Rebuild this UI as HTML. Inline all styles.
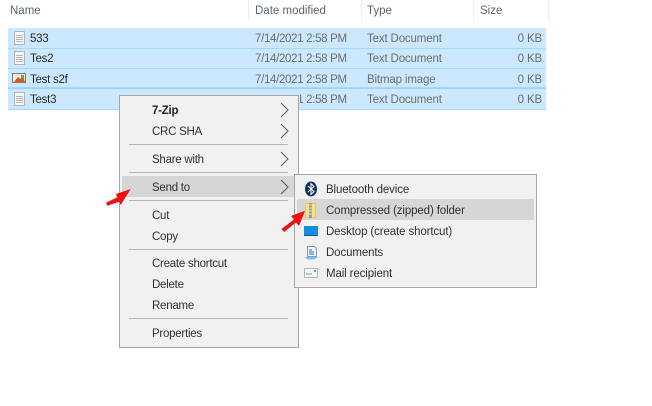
<!DOCTYPE html>
<html>
<head>
<meta charset="utf-8">
<style>
html,body{margin:0;padding:0;width:652px;height:406px;overflow:hidden;background:#fff}
body{position:relative;font-family:"Liberation Sans",sans-serif;font-size:11.5px;color:#333}
#w{position:absolute;left:0;top:0;width:652px;height:406px;filter:blur(.3px)}
.a{position:absolute}
.t{position:absolute;white-space:nowrap;line-height:14px}
.h{color:#5a6470}
.sep{position:absolute;top:0;width:1px;height:21px;background:#ededed}
.row{position:absolute;left:8px;width:538px;height:20px;background:#cce8ff;border-bottom:1px solid #a6d8ff;box-sizing:content-box}
.g{color:#6d6d6d;letter-spacing:-.15px}
.d{letter-spacing:-.32px}
.n{color:#2a2a2a;letter-spacing:-.25px}
.m{position:absolute;background:#f1f1f1;border:1px solid #a6a6a6;box-sizing:border-box}
.ln{position:absolute;left:129px;width:159px;height:1px;background:#b5b5b5}
.i{color:#303030;letter-spacing:-.25px}
.s{color:#303030;letter-spacing:-.12px}
svg{position:absolute;overflow:visible}
</style>
</head>
<body>
<div id="w">
<div class="t h" style="left:10px;top:4px">Name</div>
<div class="t h" style="left:255px;top:4px">Date modified</div>
<div class="t h" style="left:367px;top:4px">Type</div>
<div class="t h" style="left:480px;top:4px">Size</div>
<div class="sep" style="left:248px"></div>
<div class="sep" style="left:361px"></div>
<div class="sep" style="left:473px"></div>
<div class="sep" style="left:548px"></div>

<div class="row" style="top:28px"></div>
<div class="row" style="top:49px;height:19px"></div>
<div class="row" style="top:69px;height:18px"></div>
<div class="row" style="top:88px;height:20px;border-top:1px solid #99d1ff"></div>

<svg style="left:0;top:0" width="40" height="110">
 <g fill="#f6f6f6" stroke="#b4b4b4" stroke-width="1">
  <path d="M14.5 31.5h10l0 13h-10z"/><path d="M14.5 51.5h10l0 13h-10z"/><path d="M14.5 92.5h10l0 13h-10z"/>
 </g>
 <g stroke="#b8b8b8" stroke-width="1">
  <path d="M16 35.5h7M16 37.5h7M16 39.5h7M16 41.5h7"/>
  <path d="M16 55.5h7M16 57.5h7M16 59.5h7M16 61.5h7"/>
  <path d="M16 96.5h7M16 98.5h7M16 100.5h7M16 102.5h7"/>
 </g>
 <rect x="12.5" y="73.5" width="13" height="9" fill="#f3efe8" stroke="#8a7868"/>
 <path d="M14 82l4-5 2 2 3-3 2 6z" fill="#d6581e"/>
 <rect x="21" y="75" width="3" height="3" fill="#6aa84f"/>
</svg>

<div class="t n" style="left:30px;top:32px">533</div>
<div class="t n" style="left:30px;top:52px">Tes2</div>
<div class="t n" style="left:30px;top:73px">Test s2f</div>
<div class="t n" style="left:30px;top:93px">Test3</div>

<div class="t g d" style="left:255px;top:32px">7/14/2021 2:58 PM</div>
<div class="t g d" style="left:255px;top:52px">7/14/2021 2:58 PM</div>
<div class="t g d" style="left:255px;top:73px">7/14/2021 2:58 PM</div>
<div class="t g d" style="left:255px;top:93px;clip-path:inset(0 0 0 45px)">7/14/2021 2:58 PM</div>
<div class="t g" style="left:367px;top:32px">Text Document</div>
<div class="t g" style="left:367px;top:52px">Text Document</div>
<div class="t g" style="left:367px;top:73px">Bitmap image</div>
<div class="t g" style="left:367px;top:93px">Text Document</div>
<div class="t g" style="right:110px;top:32px">0 KB</div>
<div class="t g" style="right:110px;top:52px">0 KB</div>
<div class="t g" style="right:110px;top:73px">0 KB</div>
<div class="t g" style="right:110px;top:93px">0 KB</div>

<div class="m" style="left:119px;top:95px;width:180px;height:253px"></div>
<div class="a" style="left:122px;top:176px;width:172px;height:21px;background:#d6d6d6"></div>
<div class="ln" style="top:144px"></div>
<div class="ln" style="top:172px"></div>
<div class="ln" style="top:200px"></div>
<div class="ln" style="top:249px"></div>
<div class="ln" style="top:318px"></div>

<div class="t i" style="left:152px;top:104px;font-weight:bold;color:#222">7-Zip</div>
<div class="t i" style="left:152px;top:125px">CRC SHA</div>
<div class="t i" style="left:152px;top:153px">Share with</div>
<div class="t i" style="left:152px;top:181px">Send to</div>
<div class="t i" style="left:152px;top:209px">Cut</div>
<div class="t i" style="left:152px;top:230px">Copy</div>
<div class="t i" style="left:152px;top:257px">Create shortcut</div>
<div class="t i" style="left:152px;top:278px">Delete</div>
<div class="t i" style="left:152px;top:299px">Rename</div>
<div class="t i" style="left:152px;top:327px">Properties</div>

<svg style="left:0;top:0" width="300" height="200" fill="none" stroke="#5a5a5a" stroke-width="1">
 <path d="M281 103l7 7-7 7"/><path d="M281 124l7 7-7 7"/><path d="M281 152l7 7-7 7"/><path d="M281 180l7 7-7 7"/>
</svg>

<div class="m" style="left:294px;top:174px;width:243px;height:114px"></div>
<div class="a" style="left:297px;top:199px;width:237px;height:21px;background:#d6d6d6"></div>

<div class="t s" style="left:326px;top:183px">Bluetooth device</div>
<div class="t s" style="left:326px;top:204px">Compressed (zipped) folder</div>
<div class="t s" style="left:326px;top:225px">Desktop (create shortcut)</div>
<div class="t s" style="left:326px;top:246px">Documents</div>
<div class="t s" style="left:326px;top:267px">Mail recipient</div>

<svg style="left:0;top:0" width="652" height="406">
 <!-- bluetooth -->
 <ellipse cx="311" cy="189" rx="6" ry="7.5" fill="#12355f"/>
 <path d="M308 186l6 5.5-3 2.8v-10.6l3 2.8-6 5.500" fill="none" stroke="#fff" stroke-width="1"/>
 <!-- zip folder -->
 <rect x="305.500" y="203.500" width="10" height="14" fill="#f8de84" stroke="#e6c860"/>
 <rect x="309" y="203" width="3" height="15" fill="#9a9a8a"/>
 <path d="M309 205h3M309 208h3M309 211h3M309 214h3" stroke="#e8e8d8" stroke-width="1"/>
 <!-- desktop -->
 <rect x="304" y="226" width="14" height="9" fill="#1b8be0"/>
 <rect x="304" y="235" width="14" height="1" fill="#0d5fa6"/>
 <!-- documents -->
 <path d="M307.500 246.500h7l2 2v8h-9z" fill="#eef3fa" stroke="#7c9cc0"/>
 <path d="M309 250h3M309 252h5M309 254h5" stroke="#2e74c0" stroke-width="1"/>
 <path d="M304 257h14l-4 2.500h-6z" fill="#7cc0ea"/>
 <!-- mail -->
 <rect x="304.500" y="268.500" width="13" height="9" fill="#f5f5f5" stroke="#b8b8b8"/>
 <rect x="306" y="273" width="6" height="2" fill="#a8c8e4"/>
 <rect x="314" y="270" width="2" height="2" fill="#7a9cc0"/>
 <!-- arrows -->
 <path d="M130.700 189L116 194l1.300 3.300-11.300 5.400 1.300 3 12-4 1.400 3.300z" fill="#ee0f0f"/>
 <path d="M305 210.700L291 216l3 3.500-12.500 9.500 2.500 3 12-9.500 3 3.500z" fill="#ee0f0f"/>
</svg>
</div>
</body>
</html>
